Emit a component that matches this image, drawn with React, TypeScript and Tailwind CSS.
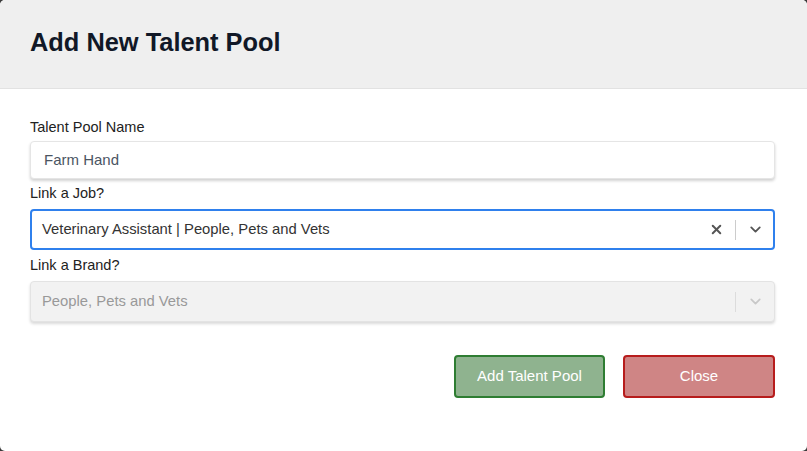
import { X, ChevronDown } from 'lucide-react';

export default function App() {
  return (
    <div className="h-[451px] w-[807px] bg-[#3a3a3a] font-['Liberation_Sans',Arial,sans-serif]">
      <div className="flex h-full w-full flex-col overflow-hidden rounded-[5px] bg-white">
        {/* header */}
        <div className="flex h-[89px] items-center border-b border-[#e2e2e2] bg-[#efefef] px-[30px] pb-[4px]">
          <h1 className="text-[25.4px] font-bold text-[#111827]">Add New Talent Pool</h1>
        </div>

        {/* body */}
        <div className="flex flex-col pl-[30px] pr-[32px] pt-[29px]">
          <label className="text-[14.5px] leading-[18px] text-[#222]">Talent Pool Name</label>
          <div className="mt-[5px] flex h-[38px] items-center rounded-[4px] border border-[#e5e5e5] bg-white px-[13px] text-[15px] text-[#4b5563] shadow-[0_2px_3px_rgba(0,0,0,0.18)]">
            Farm Hand
          </div>

          <label className="mt-[5px] text-[14.5px] leading-[18px] text-[#222]">Link a Job?</label>
          <div className="mt-[7px] flex h-[41px] items-center rounded-[4px] border-2 border-[#2f80ed] bg-white pl-[10px] text-[14.8px] text-[#333]">
            <span className="flex-1">Veterinary Assistant | People, Pets and Vets</span>
            <div className="flex items-center">
              <X className="mr-[11px] h-[15px] w-[15px] text-[#555]" strokeWidth={3.2} />
              <div className="h-[20px] w-px bg-[#ccc]" />
              <ChevronDown className="ml-[11px] mr-[9px] h-[17px] w-[17px] text-[#555]" strokeWidth={2.6} />
            </div>
          </div>

          <label className="mt-[6px] text-[14.5px] leading-[18px] text-[#222]">Link a Brand?</label>
          <div className="mt-[7px] flex h-[41px] items-center rounded-[4px] border border-[#e3e3e3] bg-[#f2f2f2] pl-[11px] text-[14.8px] text-[#999] shadow-[0_2px_3px_rgba(0,0,0,0.15)]">
            <span className="flex-1">People, Pets and Vets</span>
            <div className="flex items-center">
              <div className="h-[20px] w-px bg-[#dcdcdc]" />
              <ChevronDown className="ml-[11px] mr-[10px] h-[17px] w-[17px] text-[#c8c8c8]" strokeWidth={2.4} />
            </div>
          </div>

          <div className="mt-[33px] flex justify-end gap-[18px]">
            <button className="h-[43px] w-[151px] rounded-[4px] border-2 border-[#2e7d32] bg-[#8fb38f] text-[15px] text-white">
              Add Talent Pool
            </button>
            <button className="h-[43px] w-[152px] rounded-[4px] border-2 border-[#b71c1c] bg-[#cf8585] text-[15px] text-white">
              Close
            </button>
          </div>
        </div>
      </div>
    </div>
  );
}
